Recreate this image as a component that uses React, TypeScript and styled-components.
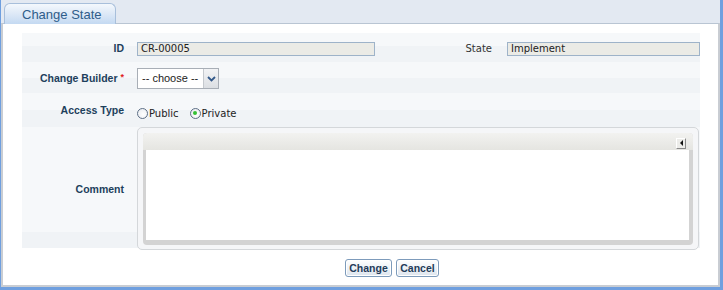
import React from 'react';
import styled, { createGlobalStyle } from 'styled-components';

const GlobalStyle = createGlobalStyle`
  html, body {
    margin: 0;
    padding: 0;
    background: #ffffff;
  }
  * {
    box-sizing: border-box;
  }
`;

const Frame = styled.div`
  width: 723px;
  height: 290px;
  display: flex;
  flex-direction: column;
  background: #e3e9f2;
  border-left: 1px solid #6f9fdf;
  border-right: 3px solid #6f9fdf;
  border-bottom: 3px solid #6f9fdf;
  font-family: 'Liberation Sans', Arial, sans-serif;
`;

const Header = styled.div`
  height: 23px;
  display: flex;
  align-items: flex-end;
  padding-left: 3px;
`;

const Tab = styled.div`
  width: 112px;
  height: 21px;
  margin-bottom: -1px;
  padding-left: 17px;
  display: flex;
  align-items: center;
  border: 1px solid #a8bfdb;
  border-bottom: none;
  border-radius: 6px 6px 0 0;
  background: linear-gradient(to bottom, #f4f8fd 0%, #dfeaf7 45%, #c4d9f2 100%);
  color: #2f5d8a;
  font-family: 'Liberation Sans', Tahoma, sans-serif;
  font-size: 13px;
  white-space: nowrap;
  position: relative;
  z-index: 1;
`;

const Panel = styled.div`
  flex: 1;
  background: #ffffff;
  border: 2px solid #c9cdd3;
  border-top: 1px solid #b9c5d3;
  padding: 9px 18px 0 19px;
  display: flex;
  flex-direction: column;
`;

const Row = styled.div<{ $h: number; $split?: number }>`
  height: ${(p) => p.$h}px;
  display: grid;
  grid-template-columns: 104px 1fr;
  align-items: center;
  background: linear-gradient(
    to bottom,
    #f6f8fa 0,
    #f6f8fa ${(p) => p.$split ?? p.$h / 2}px,
    #f0f3f6 ${(p) => p.$split ?? p.$h / 2}px,
    #f0f3f6 100%
  );
`;

const Label = styled.div`
  text-align: right;
  padding-right: 2px;
  font-size: 10.5px;
  font-weight: bold;
  color: #1d3f5c;
  white-space: nowrap;
`;

const Required = styled.span`
  color: #e02020;
  font-size: 9px;
  margin-left: 3px;
  vertical-align: 2px;
`;

const Field = styled.div`
  padding-left: 11px;
  display: flex;
  align-items: center;
`;

const ReadOnly = styled.div<{ $w: number }>`
  width: ${(p) => p.$w}px;
  height: 14px;
  margin-top: 2px;
  border: 1px solid #9eb3c9;
  background: #ebebe6;
  padding-left: 3px;
  font-family: 'DejaVu Sans', Verdana, sans-serif;
  font-size: 10px;
  line-height: 12px;
  color: #222;
`;

const SideLabel = styled.div`
  flex: 1;
  text-align: right;
  padding-right: 15px;
  margin-top: 2px;
  font-family: 'DejaVu Sans', Verdana, sans-serif;
  font-size: 10px;
  color: #333;
`;

const Select = styled.div`
  display: flex;
  height: 21px;
  width: 82px;
  border: 1px solid #a8aeb6;
  background: #fff;
  margin-top: 2px;
`;

const SelectText = styled.div`
  flex: 1;
  padding-left: 4px;
  font-size: 11px;
  line-height: 19px;
  color: #222;
  white-space: nowrap;
`;

const SelectArrow = styled.div`
  width: 15px;
  display: flex;
  align-items: center;
  justify-content: center;
  border-left: 1px solid #c5c9ce;
  background: linear-gradient(to bottom, #f2f3f5, #dcdfe3);
`;

const RadioGroup = styled.div`
  display: flex;
  align-items: center;
  gap: 11px;
  font-family: 'DejaVu Sans', Verdana, sans-serif;
  font-size: 10px;
  color: #222;
  margin-top: 6px;
`;

const RadioItem = styled.label`
  display: flex;
  align-items: center;
`;

const RadioDot = styled.span<{ $checked?: boolean }>`
  width: 11px;
  height: 11px;
  border-radius: 50%;
  border: 1px solid #5d6f86;
  background: radial-gradient(circle at 60% 60%, #ffffff 0, #e6e9ee 100%);
  display: inline-flex;
  align-items: center;
  justify-content: center;
  margin-right: 1px;

  &::after {
    content: '';
    display: ${(p) => (p.$checked ? 'block' : 'none')};
    width: 4px;
    height: 4px;
    border-radius: 50%;
    background: #35c135;
  }
`;

const Editor = styled.div`
  width: 562px;
  height: 123px;
  border: 1px solid #d4d7da;
  border-radius: 5px;
  background: #f5f6f8;
  padding: 5px 5px 4px 5px;
`;

const EditorInner = styled.div`
  height: 100%;
  border-radius: 4px;
  background: #d3d3d3;
  display: flex;
  flex-direction: column;
  overflow: hidden;
`;

const Toolbar = styled.div`
  height: 17px;
  display: flex;
  align-items: center;
  justify-content: flex-end;
  padding: 3px 7px 0 0;
  background: linear-gradient(to bottom, #f2f2f0, #e5e5e1);
`;

const ToolButton = styled.div`
  width: 10px;
  height: 11px;
  border: 1px solid;
  border-color: #ffffff #8a8a8a #8a8a8a #ffffff;
  background: #ecece9;
  display: flex;
  align-items: center;
  justify-content: center;

  &::before {
    content: '';
    width: 0;
    height: 0;
    border-top: 3px solid transparent;
    border-bottom: 3px solid transparent;
    border-right: 3px solid #111;
  }
`;

const TextArea = styled.div`
  flex: 1;
  margin: 0 4px 5px 3px;
  background: #ffffff;
`;

const Actions = styled.div`
  display: flex;
  gap: 4px;
  padding: 11px 0 0 323px;
`;

const Button = styled.button<{ $w: number }>`
  width: ${(p) => p.$w}px;
  height: 18px;
  padding: 0;
  border: 1px solid #7d9bbb;
  border-radius: 3px;
  box-shadow: inset 0 0 0 1px #ffffff;
  background: linear-gradient(to bottom, #ffffff 0%, #eef2f6 50%, #dde5ee 100%);
  font-family: 'Liberation Sans', Arial, sans-serif;
  font-size: 10.5px;
  font-weight: bold;
  color: #1f3b5a;
`;

export default function App() {
  return (
    <>
      <GlobalStyle />
      <Frame>
        <Header>
          <Tab>Change State</Tab>
        </Header>
        <Panel>
          <Row $h={29} $split={13}>
            <Label>ID</Label>
            <Field>
              <ReadOnly $w={238}>CR-00005</ReadOnly>
              <SideLabel>State</SideLabel>
              <ReadOnly $w={193}>Implement</ReadOnly>
            </Field>
          </Row>
          <Row $h={31} $split={16}>
            <Label>
              Change Builder<Required>*</Required>
            </Label>
            <Field>
              <Select>
                <SelectText>-- choose --</SelectText>
                <SelectArrow>
                  <svg width="9" height="6" viewBox="0 0 9 6">
                    <path d="M1 1 L4.5 4.5 L8 1" fill="none" stroke="#34598a" strokeWidth="1.8" />
                  </svg>
                </SelectArrow>
              </Select>
            </Field>
          </Row>
          <Row $h={34} $split={17}>
            <Label>Access Type</Label>
            <Field>
              <RadioGroup>
                <RadioItem>
                  <RadioDot />
                  Public
                </RadioItem>
                <RadioItem>
                  <RadioDot $checked />
                  Private
                </RadioItem>
              </RadioGroup>
            </Field>
          </Row>
          <Row $h={121} $split={105}>
            <Label>Comment</Label>
            <Field>
              <Editor>
                <EditorInner>
                  <Toolbar>
                    <ToolButton />
                  </Toolbar>
                  <TextArea />
                </EditorInner>
              </Editor>
            </Field>
          </Row>
          <Actions>
            <Button $w={47}>Change</Button>
            <Button $w={43}>Cancel</Button>
          </Actions>
        </Panel>
      </Frame>
    </>
  );
}
